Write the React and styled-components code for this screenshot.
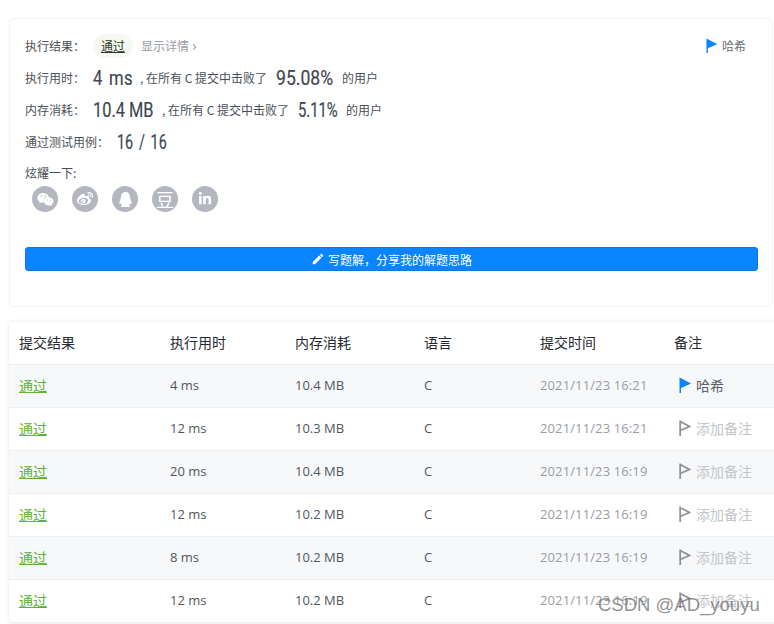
import React from "react";
import styled, { createGlobalStyle } from "styled-components";
import { FaWeixin, FaWeibo, FaQq, FaLinkedinIn } from "react-icons/fa";
import { MdEdit } from "react-icons/md";

const Global = createGlobalStyle`
  html, body { margin: 0; padding: 0; background: #fff; overflow: hidden; }
  body { font-family: "Open Sans", "Noto Sans CJK SC", sans-serif; color: #262626; }
`;
const Page = styled.div`
  position: relative;
  width: 774px;
  height: 624px;
  padding: 18px 0 0 9px;
  box-sizing: border-box;
  overflow: hidden;
`;
const Card = styled.section`
  position: relative;
  width: 764px;
  height: 289px;
  box-sizing: border-box;
  border: 1px solid #f3f3f3;
  border-radius: 5px;
  padding: 11px 15px 0;
`;
const Line = styled.div`
  display: flex;
  align-items: center;
  height: ${p => p.$h || 32}px;
  font-size: 12px;
  color: #4a4f57;
  white-space: nowrap;
  font-family: "Noto Sans CJK SC", sans-serif;
`;
const Label = styled.span`
  width: ${p => p.$w || 68}px;
  flex: none;
  font-size: 12px;
  color: #4d5156;
`;
const Pill = styled.span`
  display: inline-flex;
  align-items: center;
  justify-content: center;
  width: 40px;
  height: 24px;
  border-radius: 12px;
  background: #f6f9f2;
  color: #2f3a2a;
  font-size: 12px;
  text-decoration: underline;
  text-underline-offset: 1px;
`;
const Detail = styled.span`
  margin-left: 8px;
  font-size: 12px;
  color: #9a9da2;
`;
const Chevron = styled.span`
  font-size: 15px;
  line-height: 12px;
  margin-left: 3px;
  color: #8c8f94;
`;
/* Condensed DIN-like figures: no condensed family is installed, so the run is squeezed and given its own box width. */
const Big = styled.span`
  display: inline-block;
  flex: none;
  width: ${p => p.$w}px;
  padding-top: 2px;
  font-family: "Roboto", sans-serif;
  font-size: 20px;
  font-weight: 400;
  color: #3f4650;
  margin: ${p => p.$m || "0"};
  letter-spacing: ${p => p.$ls || "0"};
  word-spacing: ${p => p.$ws || "0"};
  -webkit-text-stroke: 0.2px #3f4650;
  transform: scaleX(${p => p.$sx});
  transform-origin: left center;
`;
const Small = styled.span`
  font-size: 12px;
  color: #4a4f57;
  margin-left: ${p => p.$ml || 0}px;
`;
const NoteTop = styled.div`
  position: absolute;
  top: 18px;
  right: 26px;
  display: flex;
  align-items: center;
  gap: 5px;
  font-size: 12px;
  color: #6a6e74;
  font-family: "Noto Sans CJK SC", sans-serif;
`;
const Share = styled.div`
  font-size: 12px;
  color: #4a4f57;
  margin-top: 7px;
  font-family: "Noto Sans CJK SC", sans-serif;
  line-height: 18px;
`;
const Icons = styled.div`
  display: flex;
  gap: 14px;
  margin: 4px 0 0 7px;
`;
const Circle = styled.span`
  width: 26px;
  height: 26px;
  border-radius: 50%;
  background: #b4b7bf;
  color: #fff;
  display: flex;
  align-items: center;
  justify-content: center;
  font-size: ${p => p.$s || 15}px;
  font-family: "Noto Sans CJK SC", sans-serif;
`;
const WriteButton = styled.div`
  margin-top: 35px;
  height: 24px;
  box-sizing: border-box;
  width: 733px;
  background: #0a84ff;
  border: 1px solid #0d78e4;
  border-radius: 3px;
  color: #fff;
  font-size: 12px;
  display: flex;
  align-items: center;
  justify-content: center;
  gap: 3px;
  font-family: "Noto Sans CJK SC", sans-serif;
`;
const Table = styled.div`
  margin-top: 15px;
  width: 770px;
  box-shadow: 0 0 4px rgba(0, 0, 0, 0.1);
  font-family: "Open Sans", "Noto Sans CJK SC", sans-serif;
`;
const Row = styled.div`
  display: grid;
  grid-template-columns: 151px 125px 129px 116px 134px 1fr;
  align-items: center;
  height: 43px;
  box-sizing: border-box;
  padding: 0 0 2px 10px;
  border-bottom: 1px solid #eceef0;
  font-size: 13px;
  background: ${p => (p.$alt ? "#f7f8fa" : "#fff")};
  color: ${p => (p.$head ? "#262a30" : "#52575e")};
`;
const HeadCell = styled.span`
  font-size: 14px;
`;
const Passed = styled.span`
  font-size: 14px;
  color: #5cb531;
  text-decoration: underline;
  text-underline-offset: 1px;
`;
const Time = styled.span`
  color: #9a9da2;
  letter-spacing: 0.12px;
`;
const NoteCell = styled.span`
  display: flex;
  align-items: center;
  gap: 5px;
  padding-left: 5px;
  font-size: 14px;
  color: ${p => (p.$empty ? "#c3c5c9" : "#5b6067")};
`;
const Watermark = styled.div`
  position: absolute;
  left: 598px;
  top: 594px;
  font-family: "Liberation Sans", sans-serif;
  font-size: 18.5px;
  color: rgba(110, 110, 110, 0.75);
  white-space: nowrap;
`;

const Flag = ({ filled, size = 16 }) => (
  <svg width={size * 0.75} height={size} viewBox="0 0 12 16" fill="none">
    {filled ? (
      <path d="M0.5 0.5 L12 6.5 L2 11 V16 H0.5 Z" fill="#0a84ff" />
    ) : (
      <path d="M1.2 1.5 L10.5 6.5 L1.2 10.5 M1.2 0.5 V16" stroke="#8f9296" strokeWidth="1.8" />
    )}
  </svg>
);

const rows = [
  ["4 ms", "10.4 MB", "2021/11/23 16:21", "哈希"],
  ["12 ms", "10.3 MB", "2021/11/23 16:21"],
  ["20 ms", "10.4 MB", "2021/11/23 16:19"],
  ["12 ms", "10.2 MB", "2021/11/23 16:19"],
  ["8 ms", "10.2 MB", "2021/11/23 16:19"],
  ["12 ms", "10.2 MB", "2021/11/23 16:19"],
];

export default function App() {
  return (
    <Page>
      <Global />
      <Card>
        <NoteTop><Flag filled size={15} />哈希</NoteTop>
        <Line $h={31}>
          <Label>执行结果：</Label>
          <Pill>通过</Pill>
          <Detail>显示详情<Chevron>›</Chevron></Detail>
        </Line>
        <Line>
          <Label>执行用时：</Label>
          <Big $w={40} $sx={0.83} $ls="0.5px" $ws="2px">4 ms</Big>
          <Small $ml={7}>, 在所有 C 提交中击败了</Small>
          <Big $w={57} $sx={0.88} $m="0 9px">95.08%</Big>
          <Small>的用户</Small>
        </Line>
        <Line>
          <Label>内存消耗：</Label>
          <Big $w={61} $sx={0.82}>10.4 MB</Big>
          <Small $ml={8}>, 在所有 C 提交中击败了</Small>
          <Big $w={39} $sx={0.74} $m="0 9px">5.11%</Big>
          <Small>的用户</Small>
        </Line>
        <Line>
          <Label $w={92}>通过测试用例：</Label>
          <Big $w={49} $sx={0.72} $ws="3px">16 / 16</Big>
        </Line>
        <Share>炫耀一下:</Share>
        <Icons>
          <Circle $s={17}><FaWeixin /></Circle>
          <Circle $s={16}><FaWeibo /></Circle>
          <Circle><FaQq size={15} /></Circle>
          <Circle $s={18}>豆</Circle>
          <Circle $s={14}><FaLinkedinIn /></Circle>
        </Icons>
        <WriteButton><MdEdit size={14} />写题解，分享我的解题思路</WriteButton>
      </Card>
      <Table>
        <Row $head>
          <HeadCell>提交结果</HeadCell>
          <HeadCell>执行用时</HeadCell>
          <HeadCell>内存消耗</HeadCell>
          <HeadCell>语言</HeadCell>
          <HeadCell>提交时间</HeadCell>
          <HeadCell>备注</HeadCell>
        </Row>
        {rows.map((r, i) => (
          <Row key={i} $alt={i % 2 === 0}>
            <span><Passed>通过</Passed></span>
            <span>{r[0]}</span>
            <span>{r[1]}</span>
            <span>C</span>
            <Time>{r[2]}</Time>
            <NoteCell $empty={!r[3]}>
              <Flag filled={!!r[3]} />
              {r[3] || "添加备注"}
            </NoteCell>
          </Row>
        ))}
      </Table>
      <Watermark>CSDN @AD_youyu</Watermark>
    </Page>
  );
}
